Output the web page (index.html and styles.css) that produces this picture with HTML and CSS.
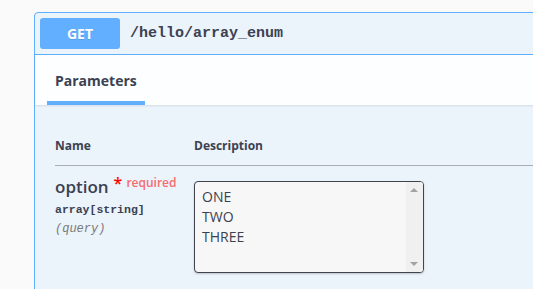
FILE: index.html
```html
<!DOCTYPE html>
<html lang="en">
<head>
  <meta charset="UTF-8" />
  <meta name="viewport" content="width=device-width, initial-scale=1.0" />
  <title>GET /hello/array_enum</title>
  <link rel="stylesheet" href="styles.css">
</head>
<body>
  <div class="opblock">
    <div class="opblock-summary">
      <span class="method">GET</span>
      <span class="path">/hello/array_enum</span>
    </div>

    <div class="section-header">
      <div class="tab active">Parameters</div>
    </div>

    <div class="table-container">
      <table class="parameters">
        <thead>
          <tr>
            <th class="col-name">Name</th>
            <th>Description</th>
          </tr>
        </thead>
        <tbody>
          <tr>
            <td class="col-name">
              <div class="param-name">option<span class="star">*</span><span class="required">required</span></div>
              <div class="param-type">array[string]</div>
              <div class="param-in">(query)</div>
            </td>
            <td>
              <div class="select">
                <ul class="options">
                  <li>ONE</li>
                  <li>TWO</li>
                  <li>THREE</li>
                </ul>
                <div class="scrollbar">
                  <span class="arrow up"></span>
                  <span class="arrow down"></span>
                </div>
              </div>
            </td>
          </tr>
        </tbody>
      </table>
    </div>
  </div>
</body>
</html>
```

FILE: styles.css
```css
body {
  margin: 0;
  padding: 12px 0 0 34px;
  background: #fafafa;
  font-family: "Open Sans", "Noto Sans", sans-serif;
  color: #3b4151;
  overflow: hidden;
}

.opblock {
  width: 620px;
  height: 400px;
  border: 1px solid #61affe;
  border-radius: 4px;
  background: #ebf3fb;
}

/* summary bar */
.opblock-summary {
  display: flex;
  align-items: center;
  padding: 5px;
  border-bottom: 1px solid #61affe;
}

.method {
  width: 80px;
  height: 31px;
  line-height: 31px;
  text-align: center;
  background: #61affe;
  border-radius: 3px;
  color: #fff;
  font-size: 14px;
  font-weight: 700;
  text-shadow: 0 1px 0 rgba(0,0,0,0.1);
}

.path {
  padding: 0 10px;
  font-family: "Liberation Mono", "DejaVu Sans Mono", monospace;
  font-size: 15px;
  font-weight: 700;
  color: #3b4151;
}

/* tab header */
.section-header {
  display: flex;
  height: 50px;
  padding: 0 20px;
  background: rgba(255,255,255,0.85);
  box-shadow: 0 1px 2px rgba(0,0,0,0.1);
}

.tab {
  position: relative;
  display: flex;
  align-items: center;
  font-size: 14px;
  font-weight: 700;
}

.tab.active::after {
  content: '';
  position: absolute;
  bottom: 0;
  left: 50%;
  width: 120%;
  height: 4px;
  transform: translateX(-50%);
  background: #61affe;
}

/* parameters table */
.table-container {
  padding: 20px 20px 0;
}

.parameters {
  width: 100%;
  border-collapse: collapse;
}

.parameters th {
  padding: 12px 0 11px;
  text-align: left;
  font-size: 12px;
  font-weight: 700;
  line-height: 17px;
  border-bottom: 1px solid #a9aeb6;
}

.parameters td {
  padding: 10px 0;
  vertical-align: top;
}

.parameters .col-name {
  width: 139px;
}

.param-name {
  font-size: 17px;
  font-weight: 600;
  line-height: 22px;
}

.star {
  position: relative;
  top: -4px;
  margin-left: 5px;
  color: #f00;
  font-size: 16px;
}

.required {
  position: relative;
  top: -6px;
  margin-left: 4px;
  color: #f56c70;
  font-size: 12px;
}

.param-type {
  margin-top: 1px;
  font-family: "Liberation Mono", "DejaVu Sans Mono", monospace;
  font-size: 11.5px;
  font-weight: 700;
  line-height: 18px;
}

.param-in {
  font-family: "Liberation Mono", "DejaVu Sans Mono", monospace;
  font-size: 12px;
  font-style: italic;
  line-height: 20px;
  color: #7a7a7a;
}

/* fake multiple select */
.select {
  position: relative;
  width: 228px;
  height: 90px;
  margin-top: 5px;
  background: #f7f7f7;
  border: 1px solid #41444e;
  border-radius: 4px;
  box-shadow: 0 1px 2px rgba(0,0,0,0.2);
  overflow: hidden;
}

.options {
  margin: 0;
  padding: 5px 7px;
  list-style: none;
  font-size: 14px;
  line-height: 20px;
  color: #3b4151;
}

.scrollbar {
  position: absolute;
  top: 0;
  right: 0;
  bottom: 0;
  width: 17px;
  background: #f0f0f0;
}

.arrow {
  position: absolute;
  left: 4px;
  width: 0;
  height: 0;
  border-left: 4px solid transparent;
  border-right: 4px solid transparent;
}

.arrow.up {
  top: 6px;
  border-bottom: 4px solid #a3a3a3;
}

.arrow.down {
  bottom: 6px;
  border-top: 4px solid #a3a3a3;
}
```
